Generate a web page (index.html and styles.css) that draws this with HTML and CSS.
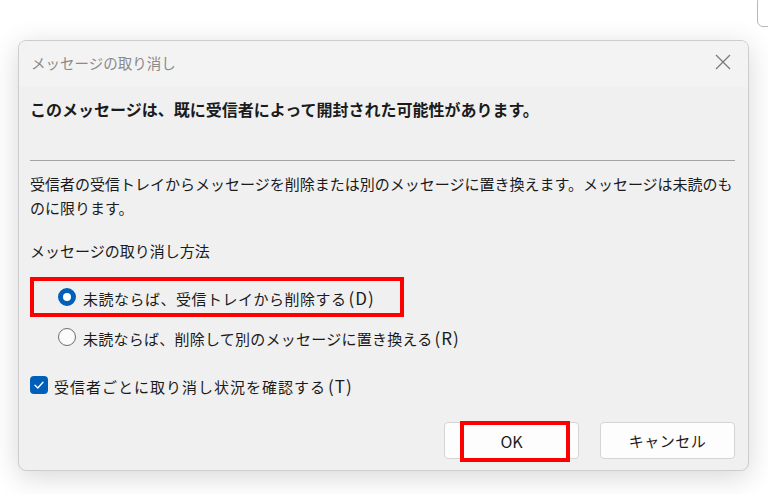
FILE: index.html
```html
<!DOCTYPE html>
<html lang="ja">
<head>
    <meta charset="UTF-8">
    <meta name="viewport" content="width=device-width, initial-scale=1.0">
    <title>メッセージの取り消し</title>
    <link rel="stylesheet" href="styles.css">
</head>
<body>
    <div class="back-window"></div>

    <div class="dialog">
        <div class="titlebar">
            <div class="title">メッセージの取り消し</div>
            <svg class="close" width="16" height="16" viewBox="0 0 16 16">
                <path d="M1 1 L15 15 M15 1 L1 15" stroke="#7a7a7a" stroke-width="1.3" fill="none"/>
            </svg>
        </div>

        <div class="content">
            <div class="heading">このメッセージは、既に受信者によって開封された可能性があります。</div>
            <div class="separator"></div>
            <div class="text">受信者の受信トレイからメッセージを削除または別のメッセージに置き換えます。メッセージは未読のものに限ります。</div>
            <div class="text label">メッセージの取り消し方法</div>

            <div class="options">
                <div class="option highlight">
                    <span class="radio checked"></span>
                    <span class="opt-text wide">未読ならば、受信トレイから削除する<span class="key">(D)</span></span>
                </div>
                <div class="option">
                    <span class="radio"></span>
                    <span class="opt-text">未読ならば、削除して別のメッセージに置き換える<span class="key">(R)</span></span>
                </div>
            </div>

            <div class="check-row">
                <span class="checkbox">
                    <svg width="12" height="12" viewBox="0 0 12 12">
                        <path d="M2 6.3 L4.8 9 L10 3.3" stroke="#fff" stroke-width="1.4" fill="none" stroke-linecap="round" stroke-linejoin="round"/>
                    </svg>
                </span>
                <span class="check-text">受信者ごとに取り消し状況を確認する<span class="key">(T)</span></span>
            </div>

            <div class="footer">
                <button class="btn ok">OK<span class="mark"></span></button>
                <button class="btn cancel">キャンセル</button>
            </div>
        </div>
    </div>
</body>
</html>
```

FILE: styles.css
```css
* {
    margin: 0;
    padding: 0;
    box-sizing: border-box;
}

body {
    background: #fff;
    color: #1b1b1b;
    font-family: "Noto Sans CJK JP", "Noto Sans", sans-serif;
    font-size: 15px;
    overflow: hidden;
    width: 768px;
    height: 494px;
    position: relative;
}

.back-window {
    position: absolute;
    top: -4px;
    left: 757px;
    width: 30px;
    height: 31px;
    border: 1px solid #b8b8b8;
    border-radius: 6px;
    background: #fff;
}

.dialog {
    margin: 40px 0 0 18px;
    width: 731px;
    height: 431px;
    border: 1px solid #cdcdcd;
    border-radius: 8px;
    background: #f0f0f0;
    box-shadow: 0 6px 28px rgba(0, 0, 0, 0.16);
    display: flex;
    flex-direction: column;
    overflow: hidden;
}

.titlebar {
    height: 46px;
    padding: 0 17px 4px 12px;
    display: flex;
    align-items: center;
    justify-content: space-between;
    background: #f3f3f3;
}

.title {
    color: #8a8a8a;
    font-size: 14.5px;
}

.content {
    flex: 1;
    display: flex;
    flex-direction: column;
    padding: 11px 13px 11px 11px;
}

.heading {
    font-weight: bold;
    font-size: 16px;
    line-height: 22px;
}

.separator {
    height: 1px;
    background: #a3a3a3;
    margin-top: 40px;
}

.text {
    line-height: 24px;
    margin-top: 11px;
}

.label {
    margin-top: 19px;
}

.options {
    margin-top: 14px;
}

.option {
    height: 40px;
    display: flex;
    align-items: center;
    gap: 7px;
    padding-left: 28px;
}

.option.highlight {
    width: 374px;
    border: 4px solid #ff0000;
    padding-left: 24px;
}

.opt-text {
    letter-spacing: 0.25px;
}

.opt-text.wide {
    letter-spacing: 0.5px;
}

.check-text {
    letter-spacing: 1px;
}

.key {
    margin-left: 2px;
    font-size: 17px;
    letter-spacing: 1px;
}

.radio {
    width: 18px;
    height: 18px;
    border-radius: 50%;
    border: 1px solid #6e6e6e;
    background: #fbfbfb;
}

.radio.checked {
    border: 5.5px solid #005fb8;
    background: #fff;
}

.check-row {
    margin-top: 16px;
    height: 24px;
    display: flex;
    align-items: center;
    gap: 6px;
}

.checkbox {
    width: 18px;
    height: 18px;
    border-radius: 4px;
    background: #005fb8;
    display: flex;
    align-items: center;
    justify-content: center;
}

.footer {
    margin-top: auto;
    display: flex;
    justify-content: flex-end;
    gap: 21px;
}

.btn {
    position: relative;
    width: 135px;
    height: 37px;
    background: #fdfdfd;
    border: 1px solid #d4d4d4;
    border-radius: 4px;
    font-family: "Noto Sans CJK JP", "Noto Sans", sans-serif;
    font-size: 16px;
    color: #1b1b1b;
}

.cancel {
    font-size: 15px;
    letter-spacing: 0.5px;
}

.mark {
    position: absolute;
    top: -2px;
    left: 15px;
    width: 110px;
    height: 41px;
    border: 4px solid #ff0000;
}
```
